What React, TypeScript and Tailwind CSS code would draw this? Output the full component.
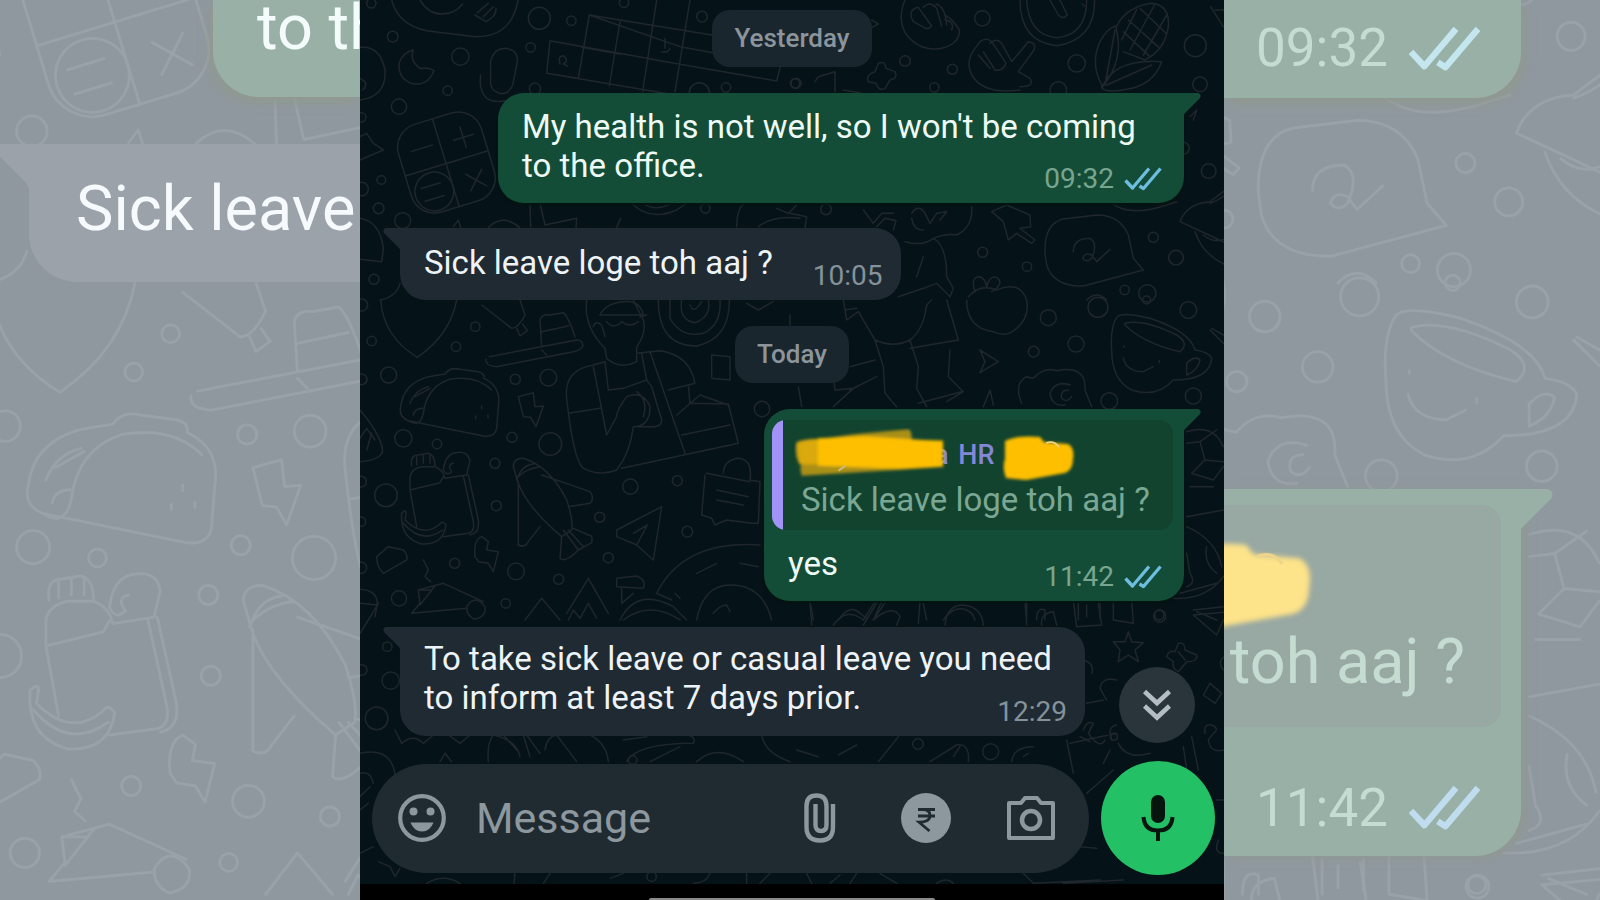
import type { ReactNode } from "react";

/* Line drawings of the wallpaper. Each group is drawn on a grid three times finer than the page. */
function Doodles() {
  return (
    <g fill="none" strokeWidth="4.5" strokeLinecap="round" strokeLinejoin="round">
      {/* top left */}
      <g transform="scale(0.33333)">
        <path d="M95 0Q115 75 200 92L345 110Q455 112 474 0M180 0Q205 42 245 42Q285 42 308 12M345 45L378 65Q410 48 408 25M352 38L385 10M370 50L400 20" />
        <circle cx="34" cy="10" r="14" /><circle cx="98" cy="110" r="16" /><circle cx="538" cy="55" r="33" />
        <circle cx="634" cy="62" r="14" /><circle cx="512" cy="142" r="14" /><circle cx="301" cy="170" r="26" />
        <circle cx="263" cy="272" r="14" /><circle cx="117" cy="320" r="23" /><circle cx="525" cy="266" r="17" />
        <circle cx="1026" cy="50" r="16" /><circle cx="792" cy="8" r="14" /><circle cx="1018" cy="278" r="30" />
        <circle cx="1098" cy="262" r="14" /><circle cx="1305" cy="250" r="14" /><circle cx="64" cy="540" r="13" />
        <circle cx="56" cy="625" r="16" /><circle cx="5" cy="567" r="20" /><circle cx="4" cy="352" r="14" />
        <circle cx="128" cy="662" r="24" /><circle cx="1036" cy="625" r="14" /><circle cx="42" cy="838" r="15" />
        <path d="M0 142Q60 135 75 210Q80 290 0 300M0 235Q30 250 8 270" />
        <path d="M160 150Q148 185 182 206Q204 200 222 212Q205 256 160 252Q112 238 118 188Q128 158 160 150Z" />
        <path d="M392 180Q405 145 435 145Q475 148 472 185L458 255Q445 285 418 280Q388 270 392 240ZM362 225Q355 270 380 295Q405 310 435 302" />
        <path d="M570 122L960 193L1250 243L1262 195L960 140L688 45L655 235L560 220ZM688 45L1056 105M665 142L780 162M780 65L748 258M890 0L848 275M990 0L945 275M560 220L945 285" />
        <path d="M600 192Q592 165 612 168Q628 182 610 192L622 198M915 115V145M905 155Q925 160 930 145" />
        <g transform="rotate(-17 260 490)">
          <rect x="130" y="350" width="260" height="275" rx="72" />
          <path d="M258 350V625M130 490H390M170 425H235M300 430H362M330 398V462M305 538L355 590M355 538L305 590M165 540H225M165 580H225" />
          <circle cx="200" cy="560" r="58" />
        </g>
        <path d="M0 410L20 400L40 430L70 450L35 465L0 480M0 655Q60 665 70 745L65 785L0 778M120 850Q110 890 60 900" />
        <path d="M510 615L512 680M540 610L555 675L650 655L648 685M280 680L295 660L302 682M385 682Q430 640 478 682M770 682L782 655M815 610Q870 665 950 630L980 610M850 610Q885 635 930 612M1130 680Q1130 630 1150 612M1195 680Q1240 645 1320 655M1250 625L1285 640L1310 615" />
      </g>
      {/* top right */}
      <g transform="translate(430 0) scale(0.33333)">
        <path d="M345 0Q320 60 350 105Q390 155 455 145Q510 130 508 90Q490 60 465 45M370 65Q350 30 385 22L425 78Q412 92 398 80ZM400 22Q420 0 440 25L455 78M438 12Q465 18 470 75M465 60Q495 65 485 90" />
        <circle cx="577" cy="55" r="23" /><circle cx="345" cy="183" r="16" /><circle cx="487" cy="208" r="15" />
        <circle cx="860" cy="190" r="26" /><circle cx="1216" cy="137" r="33" /><circle cx="1230" cy="253" r="22" />
        <circle cx="433" cy="262" r="14" /><circle cx="18" cy="250" r="15" /><circle cx="805" cy="270" r="25" />
        <circle cx="1256" cy="513" r="22" /><circle cx="1180" cy="445" r="18" /><circle cx="108" cy="628" r="16" />
        <circle cx="578" cy="757" r="15" /><circle cx="711" cy="800" r="14" /><circle cx="1090" cy="712" r="15" />
        <circle cx="1158" cy="773" r="22" /><circle cx="1072" cy="880" r="26" /><circle cx="1004" cy="870" r="14" />
        <path d="M690 0Q690 125 800 137Q915 120 914 0M710 0Q715 105 800 113Q890 105 890 0M780 0L805 45Q820 60 832 45L810 0M876 12L884 18" />
        <path d="M980 78Q1010 20 1085 10Q1140 15 1135 80Q1125 150 1065 180L1000 155M1015 60L1110 145M1050 25L1128 100M1095 12L1020 150M1130 45L1060 165M1000 95L1080 170M1040 28L995 120M935 255Q900 190 930 125Q950 85 978 78L985 125Q990 195 935 265ZM945 255L975 90M935 265Q970 175 1115 185Q1090 255 1010 268Q960 280 935 265M950 255L1085 195" />
        <path d="M690 270Q580 285 545 225Q525 185 555 145L570 125Q590 110 605 125L648 190Q638 215 615 210L580 155M600 130Q625 110 638 135L665 185L715 125Q740 128 732 150L685 215L720 235Q735 260 690 260M565 165L600 205" />
        <path d="M265 190Q285 180 288 205L315 215Q325 235 300 240L285 265Q265 275 258 250L235 245Q225 225 255 215ZM75 245L85 230L135 215V275M245 60L265 72L240 85M160 270L210 278" />
        <path d="M1262 20L1300 80M1275 30L1320 30M1200 350L1220 330L1210 360" />
        <path d="M605 635L650 615L720 645L722 680L690 685L735 720L725 730L680 700L655 720L640 665ZM0 640L50 650L45 685M220 630L250 670L275 640L310 640M260 680L285 655L318 662L310 690M365 640Q385 610 405 640L420 670L440 640L470 635L450 660M400 690Q370 690 365 655M345 725Q400 740 430 715Q470 735 470 830L490 865L480 890L440 850L400 865L325 890M400 770L380 830M430 715Q470 700 500 705Q550 680 545 620" />
        <path d="M765 760Q762 670 820 657L920 645Q990 645 1015 705L1030 775L1060 810L880 858Q790 860 770 795ZM850 755Q850 715 900 715Q925 730 905 775Q890 790 878 775Q885 755 905 765L920 785L960 748M965 610Q1020 650 1120 618L1160 605" />
        <path d="M1170 665Q1190 610 1260 605L1320 560M1170 665L1320 735M1215 695Q1240 770 1320 800M1240 705Q1270 730 1300 718M1260 610Q1290 600 1320 575" />
        <path d="M555 875Q540 830 570 830Q585 835 590 860Q600 825 620 832Q645 850 605 875M535 890Q570 850 620 870Q690 840 710 900M890 900Q920 870 950 900" />
      </g>
      {/* middle left */}
      <g transform="translate(0 300) scale(0.33333)">
        <path d="M62 0Q70 110 172 172Q270 105 290 0M365 15L455 85Q475 85 495 45L480 0M470 85L480 108L502 92L488 72M0 330Q60 400 68 450Q65 480 0 485M0 415L20 385L45 420M20 450L35 400" />
        <circle cx="346" cy="80" r="14" /><circle cx="288" cy="140" r="14" /><circle cx="35" cy="123" r="14" />
        <circle cx="86" cy="225" r="24" /><circle cx="5" cy="238" r="16" /><circle cx="466" cy="238" r="15" />
        <circle cx="565" cy="233" r="25" /><circle cx="130" cy="415" r="26" /><circle cx="231" cy="432" r="14" />
        <circle cx="456" cy="412" r="15" /><circle cx="571" cy="432" r="34" /><circle cx="405" cy="490" r="15" />
        <circle cx="78" cy="586" r="34" /><circle cx="409" cy="617" r="15" /><circle cx="811" cy="560" r="23" />
        <circle cx="952" cy="542" r="15" /><circle cx="719" cy="652" r="15" /><circle cx="982" cy="695" r="16" />
        <circle cx="745" cy="773" r="15" /><circle cx="468" cy="814" r="25" /><circle cx="284" cy="790" r="15" />
        <circle cx="596" cy="838" r="15" /><circle cx="117" cy="895" r="23" /><circle cx="437" cy="910" r="14" />
        <circle cx="1206" cy="327" r="23" /><circle cx="3" cy="545" r="16" /><circle cx="3" cy="665" r="14" />
        <circle cx="3" cy="803" r="17" /><circle cx="5" cy="15" r="18" />
        <path d="M388 170L650 120Q670 120 668 140Q660 152 640 155L410 200Q375 198 378 178M545 140L540 60Q545 42 570 45L610 38Q625 50 645 110M545 95L625 78M545 150L560 165" />
        <path d="M145 362Q115 350 122 320Q130 250 205 230L255 222Q270 200 300 208L355 215Q375 220 372 235Q425 260 415 320L410 385Q405 412 370 408L145 362Q180 385 190 340Q200 260 270 238Q350 225 395 270M160 345Q165 325 188 325M150 310Q165 270 205 260M165 290L210 265M365 318V326M347 348V356M384 345V353" />
        <path d="M475 290L520 278L525 320L550 318L528 380L512 352L490 350Z" />
        <path d="M150 530Q155 505 185 500H225Q250 510 255 535L320 525Q330 480 330 485Q325 450 285 458Q255 465 250 510Q260 530 275 515Q260 495 280 490M150 530V570L240 548L250 530M150 570L170 680M310 528L340 665Q345 695 325 700L250 710M325 525L355 660Q360 700 330 705M155 498Q150 465 175 465L205 460Q225 465 225 500M170 495V470M190 490V465M210 490V465M125 640Q120 715 185 732Q250 735 258 675Q248 660 240 672Q190 715 135 660Q145 620 125 640ZM130 670Q185 735 248 690" />
        <path d="M460 500Q460 475 490 475Q570 500 620 600Q640 660 635 690L605 710Q500 620 475 550ZM470 540Q485 495 520 492M475 530Q500 505 540 500M475 545V735Q495 745 505 725L540 680M545 525L690 575Q705 595 690 610L625 620M605 710L600 775Q615 790 655 750L695 728Q700 705 685 705L640 685M610 690L655 750M625 690L670 740" />
        <path d="M770 690L905 620L880 780L830 735L770 710ZM830 735L862 675L820 700M1040 520L1170 545M1035 525L1025 645L1055 655L1065 675L1100 660L1175 670L1195 670L1200 545L1170 540Q1180 475 1130 475Q1090 485 1090 520M1070 570L1165 590M1070 600L1150 615" />
        <path d="M620 295Q610 210 700 195L735 185L745 270L790 265L860 240L875 260L905 360Q905 380 880 380L820 380M620 295Q640 480 670 505Q720 530 770 510Q810 460 820 380Q870 380 870 320Q850 270 800 290Q770 330 770 350L740 405Q710 250 700 200M625 340L720 325M830 275Q865 300 850 350M845 160L860 240M870 155L975 460M830 160L900 152Q990 165 1005 250L925 270M985 255L990 310L1105 312L1135 430L785 505M950 345L1020 285L1105 315M965 405L1110 375" />
        <path d="M680 0Q670 80 735 145L740 175Q780 210 830 185V140Q860 100 850 60L820 0M720 45H850Q840 0 790 5Q735 10 720 45M700 80Q705 60 725 75L735 110M740 65Q760 90 785 65Q810 85 835 65M840 50L860 45M895 0Q895 140 1010 138Q1110 115 1108 0M930 0V55Q965 115 1030 100Q1085 75 1080 0M965 0Q955 60 1005 68Q1055 50 1045 0M990 15Q1000 45 1025 5M1055 165L1110 170V240L1055 235ZM1290 45V75M1160 10L1195 30L1240 5" />
        <path d="M50 770L85 740L130 750Q145 765 140 780L70 820Q50 800 50 770ZM190 780L205 810L195 830L212 845M175 870L250 850L370 905M175 870L180 910L155 940L320 925M180 915L225 858M180 870H215M345 770Q340 720 365 710L385 725L380 750L415 755L400 815L385 790L355 785Z" />
        <path d="M495 960L545 895L600 960M620 940L685 835L745 940M625 960L640 930L660 955L685 910L710 955M770 835L830 828Q860 840 850 865L770 860ZM785 865V910L820 880M780 960Q830 860 940 920L980 960M790 960Q870 900 960 960M890 880Q970 720 1200 735M890 880L935 900M960 895L945 880M1010 820L1070 790M1140 790L1195 800M1010 960Q1030 850 1120 855Q1210 860 1235 960M1060 940Q1080 915 1100 915L1110 935" />
        <path d="M0 868Q50 870 52 910L45 950M0 910L50 915M320 920Q345 880 375 920Q380 950 345 958Q320 950 320 920" />
      </g>
      {/* middle right */}
      <g transform="translate(390 300) scale(0.33333)">
        <path d="M325 35L375 120Q430 145 480 120Q520 90 530 15L545 0M375 120L400 200L405 280L440 320M480 120L505 200L500 265L530 320M590 0L625 120L480 145M600 150L595 230L640 275L590 305M505 310L635 275M280 0L285 30L320 25M285 30L290 60L325 35M300 200L375 180M300 270L380 230M250 230L255 270L310 265L250 320M145 260L155 320M650 0Q650 85 730 95Q770 115 800 85Q840 50 830 0" />
        <circle cx="895" cy="53" r="24" /><circle cx="978" cy="132" r="24" /><circle cx="851" cy="155" r="16" />
        <circle cx="1315" cy="30" r="25" /><circle cx="1330" cy="288" r="24" /><circle cx="1044" cy="22" r="30" />
        <circle cx="1078" cy="303" r="25" /><circle cx="1190" cy="0" r="12" />
        <path d="M1102 50Q1080 80 1085 150Q1085 240 1145 270Q1220 295 1270 240Q1380 240 1385 175Q1375 155 1335 150Q1320 95 1200 55Q1120 35 1102 50ZM1125 75Q1180 130 1290 155Q1320 130 1280 105Q1180 55 1125 70ZM1120 175Q1130 215 1180 215L1210 200M1122 138V142M1228 182V188M1310 190Q1335 165 1350 180Q1345 210 1310 225ZM1380 90L1420 130M1385 85L1420 105" />
        <path d="M690 150L745 185L690 218L705 185ZM815 310Q790 250 830 230L850 235Q880 200 920 212Q1010 195 1005 270L1025 320M960 255Q915 240 900 280Q905 320 945 315M955 270Q930 270 935 295Q950 310 965 290M700 320L720 270L730 315" />
        <path d="M1310 395Q1390 370 1420 440M1310 430L1350 425L1365 480L1420 485M1350 425L1400 390M1365 480L1325 520L1390 540L1420 500M1320 560L1390 560M1310 650L1420 630M1310 680Q1400 720 1415 800M1370 740Q1360 790 1400 820M1310 760L1320 820Q1340 850 1310 860M1270 895Q1370 900 1420 830M1290 880L1400 850" />
        <path d="M180 905L190 960M265 960Q300 910 330 940L350 955M375 905L340 960M395 905L370 960M520 910L530 960M580 960Q610 915 650 930Q670 940 675 960M830 905V960M860 960Q860 920 885 930V960M985 905V960M1010 915V950M1050 905V955M1330 930L1420 920M1340 935L1400 960" />
        <circle cx="1228" cy="945" r="14" />
      </g>
      {/* bottom left */}
      <g transform="translate(0 600) scale(0.33333)">
        <path d="M0 100L25 60L55 10M0 460Q90 440 105 520L95 580M105 390L125 430Q160 400 190 430L220 405M265 405L300 430L330 405M240 485L255 460L275 485M385 485Q380 430 400 405M400 405Q470 420 480 470M430 405L470 450M490 405L510 470M500 405L540 460M555 450Q560 410 590 405L650 485M690 405Q740 430 745 485M800 485Q830 430 1000 430Q1010 410 980 405M790 420L860 410M1010 485Q1070 430 1150 485M1205 405Q1215 460 1290 485M870 485L960 440M0 520Q30 510 40 550M0 590L30 560M0 630L25 610" />
        <circle cx="92" cy="242" r="26" /><circle cx="50" cy="355" r="34" /><circle cx="82" cy="140" r="14" />
        <circle cx="5" cy="210" r="16" /><circle cx="818" cy="480" r="13" /><circle cx="875" cy="830" r="14" />
        <path d="M55 785L90 800L105 830L120 805M0 760L40 740M200 850Q250 820 300 850M465 820L462 850M550 850L570 820M750 835L790 820M1000 850Q1040 850 1050 820M1160 850V820M1200 850L1230 820" />
      </g>
      {/* bottom right */}
      <g transform="translate(430 600) scale(0.33333)">
        <path d="M60 0L65 75M130 75Q170 20 220 60M265 0L220 75M290 0L250 60Q310 10 330 50L320 75M390 0L385 70M465 75Q470 15 520 15Q575 20 580 75M705 0L710 75M755 75Q750 40 790 35L800 75M850 0L860 80L935 75L925 10M970 0V60L1030 70L1025 0M1210 45L1320 35M1210 45L1280 105L1300 60" />
        <path d="M1015 95L1025 125L1060 128L1035 150L1045 185L1015 165L985 185L990 150L970 125L1005 125ZM1165 130Q1185 125 1185 150L1220 165Q1225 185 1190 185L1165 215Q1145 205 1150 185L1130 170Q1135 150 1155 155ZM1165 155L1185 180M1240 285L1260 250L1295 280L1275 310ZM930 265Q935 230 980 240M930 265L950 300M880 180Q915 190 905 220M890 310L940 300M880 390Q890 360 910 370L895 400Q930 450 945 420M965 420Q950 380 980 375M985 430Q1010 480 1080 460M1245 400Q1240 370 1265 375Q1290 385 1270 400L1255 420Q1260 460 1300 450M1205 410L1225 510M1180 440L1190 510M830 420L850 520M840 430L980 400M940 490L960 450M890 580L970 510M870 410L900 425M1320 160Q1275 180 1300 210" />
        <path d="M20 450L85 470M145 465L200 435M265 485L325 410M420 485L500 435Q540 430 535 485M490 470L510 440M665 485Q670 440 730 440M700 470L715 460M870 740L920 745M700 820L730 850L930 840M820 850L1000 840M50 820L65 850M120 850L150 825M180 850L200 820M270 820L320 850M440 850Q470 830 490 850M1285 720Q1270 760 1300 760M1280 600H1305" />
        <circle cx="384" cy="432" r="16" /><circle cx="602" cy="455" r="24" /><circle cx="1109" cy="48" r="18" /><circle cx="972" cy="410" r="10" />
      </g>
    </g>
  );
}

function Wallpaper({ viewBox, className }: { viewBox: string; className: string }) {
  return (
    <svg
      viewBox={viewBox}
      preserveAspectRatio="xMinYMin slice"
      aria-hidden="true"
      className={`pointer-events-none absolute inset-0 h-full w-full ${className}`}
    >
      <Doodles />
    </svg>
  );
}

function Ticks({ className }: { className: string }) {
  return (
    <svg viewBox="0 0 38 24" fill="none" stroke="currentColor" strokeWidth="3.3" className={className} role="img" aria-label="Read">
      <path d="M1.5 13.5L8.5 21L25 1.5M15.5 19L19.5 21.5L36.5 1.5" strokeLinejoin="round" />
    </svg>
  );
}

function Tail({ className }: { className: string }) {
  return (
    <svg viewBox="0 0 36 26" fill="currentColor" aria-hidden="true" className={className}>
      <path d="M0 0H33Q37 1 35 5L20 20Q18 22 18 26H0Z" />
    </svg>
  );
}

function Smudge({ className }: { className: string }) {
  return (
    <svg viewBox="0 0 156 50" aria-hidden="true" className={className}>
      <g filter="url(#soft)">
        <path d="M2 15Q4 11 26 11L60 6L116 1Q120 3 119 12L151 12V39L108 42L8 48Q6 44 7 37Q0 30 2 15Z" fill="#a98f18" />
        <path d="M3 15Q14 10 26 11L26 36Q14 38 5 36Z" fill="#d9a90e" />
        <path d="M24 10L72 8L151 13V39L106 41L24 38Z" fill="#fdbf04" />
      </g>
      <path d="M45 43L52 38" stroke="#c9bb7e" strokeWidth="2" />
    </svg>
  );
}

function SmallSmudge({ className }: { className: string }) {
  return (
    <svg viewBox="0 0 74 48" aria-hidden="true" className={className}>
      <g filter="url(#soft)">
        <path d="M3 7Q14 1 38 3L42 8L66 10Q73 14 71 25Q71 36 63 39L24 46L4 44Q0 34 3 25Z" fill="currentColor" />
      </g>
      <path d="M44 9Q52 6 57 13" fill="none" stroke="#f0d489" strokeWidth="1.6" />
    </svg>
  );
}

function DayChip({ children }: { children: ReactNode }) {
  return (
    <div className="flex h-[57px] items-center self-center rounded-[18px] bg-[#1a262d] px-[22px] text-[26px] font-medium text-[#8b959b]">
      {children}
    </div>
  );
}

function Time({ children, read }: { children: ReactNode; read?: boolean }) {
  return (
    <div className={`flex items-center gap-[10px] text-[28px] leading-8 ${read ? "text-[#79a590]" : "text-[#85929a]"}`}>
      <time>{children}</time>
      {read && <Ticks className="h-6 w-[38px] text-[#6cbde0]" />}
    </div>
  );
}

const sent = "relative self-end rounded-[26px] rounded-tr-none bg-[#144d37] text-[#eefaf5] shadow-[0_2px_2px_#03150f]";
const received = "relative self-start rounded-[26px] rounded-tl-none bg-[#1f2a32] text-[#edf3f6]";

function BackdropLeft() {
  return (
    <div aria-hidden="true" className="relative w-[22.5%] shrink-0 overflow-hidden bg-[#8f989f]">
      <Wallpaper viewBox="26 152 189 471" className="stroke-[#9aa2a9]" />
      <div className="relative flex flex-col">
        <div className="ml-[213px] h-[97px] rounded-bl-[46px] bg-[#98b0a6] pl-[44px] shadow-[-4px_6px_12px_#90998f]">
          <p className="-mt-2 text-[63px] leading-[72px] whitespace-nowrap text-[#f3fcfb]">to th</p>
        </div>
        <div className="relative mt-[47px] ml-[29px] h-[138px] rounded-bl-[48px] bg-[#9ba2aa] pt-[27px] pl-[47px]">
          <Tail className="absolute top-0 -left-[34px] h-[50px] w-[69px] -scale-x-100 text-[#9ba2aa]" />
          <p className="relative text-[63px] leading-[76px] whitespace-nowrap text-[#f6fafd]">Sick leave</p>
        </div>
      </div>
    </div>
  );
}

function BackdropRight() {
  return (
    <div aria-hidden="true" className="relative min-w-0 flex-1 overflow-hidden bg-[#8f989f]">
      <Wallpaper viewBox="667 152 197 471" className="stroke-[#9aa2a9]" />
      <div className="relative flex flex-col pr-[79px]">
        <div className="flex h-[98px] items-center justify-end gap-[20px] rounded-br-[46px] bg-[#98b0a6] pr-[40px] text-[53px] text-[#c4dcd2] shadow-[4px_6px_12px_#90998f]">
          <span>09:32</span>
          <Ticks className="h-[46px] w-[73px] text-[#c3e6ef]" />
        </div>
        <div className="relative mt-[391px] h-[367px] rounded-br-[46px] bg-[#98b0a6] pt-[16px] pr-[20px] shadow-[4px_2px_12px_#90998f]">
          <Tail className="absolute top-0 -right-[32px] h-[50px] w-[69px] text-[#98b0a6]" />
          <div className="relative flex h-[222px] flex-col items-end rounded-r-[20px] bg-[#98a8a2] pr-[36px]">
            <SmallSmudge className="mt-[34px] mr-[150px] h-[92px] w-[142px] text-[#fde389]" />
            <p className="-mt-[7px] text-[63px] leading-[76px] whitespace-nowrap text-[#c4dcd2]">toh aaj ?</p>
          </div>
          <div className="mt-[49px] flex items-center justify-end gap-[20px] pr-[20px] text-[53px] leading-[64px] text-[#c4dcd2]">
            <span>11:42</span>
            <Ticks className="h-[46px] w-[73px] text-[#c0dcef]" />
          </div>
        </div>
      </div>
    </div>
  );
}

export default function App() {
  return (
    <div className="flex min-h-screen w-full overflow-hidden bg-[#8f989f] font-[Roboto,sans-serif]">
      <svg className="absolute h-0 w-0" aria-hidden="true">
        <filter id="soft" x="-10%" y="-10%" width="120%" height="120%">
          <feGaussianBlur stdDeviation="1.4" />
        </filter>
      </svg>
      <BackdropLeft />
      <main className="relative flex w-[54%] shrink-0 flex-col overflow-hidden bg-[#051217]">
        <Wallpaper viewBox="0 0 864 900" className="stroke-[#1f272c]" />

        <div className="relative flex flex-1 flex-col px-10 pt-[10px]">
          <DayChip>Yesterday</DayChip>

          <article className={`${sent} mt-[26px] h-[110px] w-[686px] pt-[14px] pl-6`}>
            <Tail className="absolute top-0 -right-[17px] h-[26px] w-9 text-[#144d37]" />
            <p className="text-[33px] leading-[39px]">
              My health is not well, so I won't be coming
              <br />
              to the office.
            </p>
            <div className="absolute right-[22px] bottom-2">
              <Time read>09:32</Time>
            </div>
          </article>

          <article className={`${received} mt-[25px] flex h-[72px] items-end gap-10 pr-[18px] pb-2 pl-6`}>
            <Tail className="absolute top-0 -left-[17px] h-[26px] w-9 -scale-x-100 text-[#1f2a32]" />
            <p className="relative pb-[10px] text-[33px] leading-[39px]">Sick leave loge toh aaj ?</p>
            <Time>10:05</Time>
          </article>

          <div className="mt-[26px] flex flex-col">
            <DayChip>Today</DayChip>
          </div>

          <article className={`${sent} mt-[26px] h-[192px] w-[420px] pt-[11px] pr-[11px] pl-2`}>
            <Tail className="absolute top-0 -right-[17px] h-[26px] w-9 text-[#144d37]" />
            <blockquote className="relative flex h-[110px] overflow-hidden rounded-[14px] bg-[#12432f]">
              <div className="w-[11px] shrink-0 bg-[#a294f6]" />
              <div className="min-w-0 pl-[11px]">
                <div className="flex h-[60px] items-center pt-[10px] text-[27px] font-medium text-[#8487d8]">
                  <Smudge className="relative z-10 -mt-1 -mr-[14px] h-[50px] w-[154px] shrink-0" />
                  <span>a&nbsp;</span>
                  <span className="pl-[3px]">HR</span>
                  <SmallSmudge className="mt-[6px] ml-2 h-[48px] w-[74px] shrink-0 text-[#fdbf04]" />
                </div>
                <p className="pl-[7px] text-[33px] leading-[39px] whitespace-nowrap text-[#7ba793]">Sick leave loge toh aaj ?</p>
              </div>
            </blockquote>
            <div className="flex items-start justify-between pt-[14px] pr-[11px] pl-4">
              <p className="text-[33px] leading-[39px]">yes</p>
              <div className="pt-[11px]">
                <div className="pt-[6px]">
                  <Time read>11:42</Time>
                </div>
              </div>
            </div>
          </article>

          <article className={`${received} mt-[26px] h-[109px] w-[685px] pt-3 pl-6`}>
            <Tail className="absolute top-0 -left-[17px] h-[26px] w-9 -scale-x-100 text-[#1f2a32]" />
            <p className="relative text-[33px] leading-[39px]">
              To take sick leave or casual leave you need
              <br />
              to inform at least 7 days prior.
            </p>
            <div className="absolute right-[18px] bottom-2">
              <Time>12:29</Time>
            </div>
          </article>

          <button
            type="button"
            aria-label="Scroll to latest"
            className="absolute right-[29px] bottom-0 flex h-[76px] w-[76px] items-center justify-center rounded-full bg-[#2a343b] text-[#b4bdc3]"
          >
            <svg viewBox="0 0 28 32" fill="none" stroke="currentColor" strokeWidth="4.6" className="h-8 w-7">
              <path d="M1.5 2.5L14 14L26.5 2.5M1.5 17L14 28.5L26.5 17" />
            </svg>
          </button>
        </div>

        <form className="relative mt-[18px] mb-[9px] flex items-center gap-[12px] pr-[9px] pl-3">
          <div className="flex h-[109px] min-w-0 flex-1 items-center rounded-full bg-[#1f2a31] pr-[34px] pl-[26px] text-[#8d979e]">
            <button type="button" aria-label="Emoji" className="shrink-0">
              <svg viewBox="0 0 48 48" fill="currentColor" className="h-12 w-12">
                <circle cx="24" cy="24" r="21.8" fill="none" stroke="currentColor" strokeWidth="4.2" />
                <circle cx="15.5" cy="17.5" r="4" />
                <circle cx="32.5" cy="17.5" r="4" />
                <path d="M12.5 28.5H35.5Q32 37.5 24 37.5Q16 37.5 12.5 28.5Z" />
              </svg>
            </button>
            <input
              aria-label="Message"
              placeholder="Message"
              className="ml-[30px] min-w-0 flex-1 bg-transparent text-[43px] leading-[52px] outline-none placeholder:text-[#8d979e]"
            />
            <button type="button" aria-label="Attach" className="mr-[65px] shrink-0">
              <svg viewBox="0 0 32 50" fill="none" stroke="currentColor" strokeWidth="4.4" className="h-[50px] w-8">
                <path d="M29 11V34Q29 47.5 16 47.5Q2.5 47.5 2.5 34V13Q2.5 2.5 12.5 2.5Q22.5 2.5 22.5 13V32Q22.5 38 17 38Q11.5 38 11.5 32V11" />
              </svg>
            </button>
            <button type="button" aria-label="Send payment" className="mr-[56px] shrink-0">
              <svg viewBox="0 0 50 50" className="h-[50px] w-[50px]">
                <circle cx="25" cy="25" r="25" fill="currentColor" />
                <path d="M17 16.5H34M17 23H34M18 16.5H22Q29 16.5 29 22.5Q29 29 18 29.2L28.5 38" fill="none" stroke="#1f2a31" strokeWidth="2.8" />
              </svg>
            </button>
            <button type="button" aria-label="Camera" className="shrink-0">
              <svg viewBox="0 0 48 44" fill="none" stroke="currentColor" strokeWidth="4" strokeLinejoin="round" className="h-11 w-12">
                <path d="M2 7H14L18 2H30L34 7H46V42H2Z" />
                <circle cx="24" cy="24" r="9" strokeWidth="4.5" />
              </svg>
            </button>
          </div>
          <button
            type="button"
            aria-label="Record voice message"
            className="flex h-[114px] w-[114px] shrink-0 items-center justify-center rounded-full bg-[#24c066] text-[#06160f]"
          >
            <svg viewBox="0 0 34 46" fill="currentColor" className="h-[46px] w-[34px]">
              <rect x="10" y="0" width="14" height="28" rx="7" />
              <path d="M2.5 22Q3.5 35.5 17 35.5Q30.5 35.5 31.5 22M17 35.5V46" fill="none" stroke="currentColor" strokeWidth="4" />
            </svg>
          </button>
        </form>

        <footer className="relative flex h-[16px] items-end justify-center bg-black">
          <div className="h-[2px] w-[286px] rounded-t bg-[#8b8b8b]" />
        </footer>
      </main>
      <BackdropRight />
    </div>
  );
}
